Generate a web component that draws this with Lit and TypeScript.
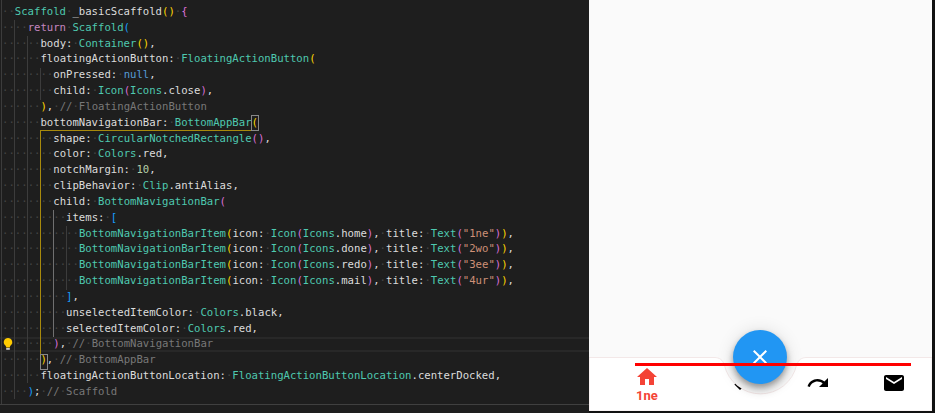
import { LitElement, html, css } from "lit";
import { customElement } from "lit/decorators.js";

type Seg = [string, string];
const t = "t", k = "k", f = "f", c = "c", n = "n", m = "m", y = "y", p = "p", b = "b", s = "s", v = "v";
const LINES: { i: number; segs: Seg[] }[] = [
  { i: 1, segs: [[t, "Scaffold"], [f, " _basicScaffold"], [y, "("], [y, ")"], [f, " "], [m, "{"]] },
  { i: 2, segs: [[k, "return"], [f, " "], [t, "Scaffold"], [b, "("]] },
  { i: 3, segs: [[f, "body: "], [t, "Container"], [y, "()"], [f, ","]] },
  { i: 3, segs: [[f, "floatingActionButton: "], [t, "FloatingActionButton"], [y, "("]] },
  { i: 4, segs: [[f, "onPressed: "], [n, "null"], [f, ","]] },
  { i: 4, segs: [[f, "child: "], [t, "Icon"], [p, "("], [t, "Icons"], [f, ".close"], [p, ")"], [f, ","]] },
  { i: 3, segs: [[y, ")"], [f, ", "], [c, "// FloatingActionButton"]] },
  { i: 3, segs: [[f, "bottomNavigationBar: "], [t, "BottomAppBar"], [y, "("]] },
  { i: 4, segs: [[f, "shape: "], [t, "CircularNotchedRectangle"], [p, "()"], [f, ","]] },
  { i: 4, segs: [[f, "color: "], [t, "Colors"], [f, ".red,"]] },
  { i: 4, segs: [[f, "notchMargin: "], [v, "10"], [f, ","]] },
  { i: 4, segs: [[f, "clipBehavior: "], [t, "Clip"], [f, ".antiAlias,"]] },
  { i: 4, segs: [[f, "child: "], [t, "BottomNavigationBar"], [p, "("]] },
  { i: 5, segs: [[f, "items: "], [b, "["]] },
  ...[["home", "1ne"], ["done", "2wo"], ["redo", "3ee"], ["mail", "4ur"]].map(([ic, ti]) => ({
    i: 6,
    segs: [[t, "BottomNavigationBarItem"], [y, "("], [f, "icon: "], [t, "Icon"], [p, "("], [t, "Icons"], [f, "." + ic], [p, ")"], [f, ", title: "], [t, "Text"], [p, "("], [s, `"${ti}"`], [p, ")"], [y, ")"], [f, ","]] as Seg[],
  })),
  { i: 5, segs: [[b, "]"], [f, ","]] },
  { i: 5, segs: [[f, "unselectedItemColor: "], [t, "Colors"], [f, ".black,"]] },
  { i: 5, segs: [[f, "selectedItemColor: "], [t, "Colors"], [f, ".red,"]] },
  { i: 4, segs: [[p, ")"], [f, ", "], [c, "// BottomNavigationBar"]] },
  { i: 3, segs: [[y, ")"], [f, ", "], [c, "// BottomAppBar"]] },
  { i: 3, segs: [[f, "floatingActionButtonLocation: "], [t, "FloatingActionButtonLocation"], [f, ".centerDocked,"]] },
  { i: 2, segs: [[b, ")"], [f, "; "], [c, "// Scaffold"]] },
];

const NOTCH = "M0 .5H125C131 .5 133.5 3 135.4 8A37 37 0 0 0 207.6 8C209.5 3 212 .5 218 .5H343V54H0z";

function token(cl: string, text: string) {
  const parts = text.split(/( )/).filter((x) => x.length);
  return parts.map((x) => (x === " " ? html`<span class="ws">·</span>` : html`<span class=${cl}>${x}</span>`));
}

@customElement("app-root")
export class AppRoot extends LitElement {
  static styles = css`
    :host { display: block; width: 935px; height: 413px; background: #111; overflow: hidden; }
    .root { display: flex; width: 935px; height: 413px; }
    .editor { position: relative; width: 589px; height: 413px; box-sizing: border-box; padding: 4px 0 0 2px; background: #1e1e1e;
      font-family: "DejaVu Sans Mono", monospace; font-size: 10.63px; color: #dcdcdc; }
    .line { position: relative; height: 15.83px; line-height: 15.83px; white-space: pre; }
    .t { color: #4ec9b0; } .k { color: #c586c0; } .f { color: #dcdcdc; } .c { color: #787878; }
    .n { color: #569cd6; } .m { color: #da70d6; } .y { color: #ffd700; } .p { color: #da70d6; }
    .b { color: #179fff; } .s { color: #ce9178; } .v { color: #b5cea8; }
    .ws { color: #444; }
    .hl { position: absolute; left: 0; right: 0; top: 337px; height: 11px; border-top: 2px solid #282828; border-bottom: 2px solid #282828; }
    .bottom { position: absolute; left: 0; right: 0; top: 404px; height: 1px; background: #404040; }
    .guide { position: absolute; width: 1px; background: #3c3c3c; }
    .g0 { left: 1px; top: 0; height: 404px; }
    .g1 { left: 14px; top: 20px; height: 379px; }
    .g2 { left: 27px; top: 36px; height: 347px; }
    .g3 { left: 40px; top: 68px; height: 32px; }
    .g4 { left: 53px; top: 210px; height: 127px; background: #707070; }
    .g5 { left: 66px; top: 226px; height: 64px; }
    .bracket { position: absolute; left: 40px; top: 130px; width: 1px; height: 225px; background: #a88a0c; }
    .bracket-top { position: absolute; left: 40px; top: 130px; width: 211px; height: 1px; background: #a88a0c; }
    .box { position: absolute; width: 6px; height: 14px; border: 1px solid #888; }
    .box-open { left: 251px; top: 115px; }
    .box-close { left: 40px; top: 354px; }
    .bulb { position: absolute; left: 0; top: 336px; }
    .phone { position: relative; width: 343px; height: 411px; background: #fafafa; overflow: hidden; }
    .bar { position: absolute; left: 0; top: 357px; width: 343px; height: 54px; }
    .red { position: absolute; left: 46px; top: 363px; width: 276px; height: 3px; background: #f00; }
    .fab { position: absolute; left: 144px; top: 330px; width: 54px; height: 54px; border-radius: 50%; background: #2196f3;
      box-shadow: 0 6px 10px rgba(0,0,0,.2), 0 1px 18px rgba(0,0,0,.12), 0 3px 5px rgba(0,0,0,.2); display: flex; align-items: center; justify-content: center; }
    .ic { position: absolute; width: 24px; height: 24px; }
    .home { left: 46px; top: 365px; }
    .redo { left: 217px; top: 371px; }
    .mail { left: 293px; top: 371px; }
    .label { position: absolute; left: 46px; width: 24px; top: 388px; text-align: center; font: 700 13px Roboto, sans-serif; color: #f44336; }
  `;
  render() {
    return html`<div class="root">
      <div class="editor">
        <div class="hl"></div>
        ${LINES.map((l) => html`<div class="line">${Array.from({ length: l.i * 2 }, () => html`<span class="ws">·</span>`)}${l.segs.map(([cl, tx]) => token(cl, tx))}</div>`)}
        <div class="guide g0"></div>
        <div class="guide g1"></div>
        <div class="guide g2"></div>
        <div class="guide g3"></div>
        <div class="guide g4"></div>
        <div class="guide g5"></div>
        <div class="bracket-top"></div><div class="bracket"></div>
        <div class="box box-open"></div><div class="box box-close"></div>
        <svg class="bulb" width="16" height="16" viewBox="0 0 16 16"><path fill="#ffcc00" d="M8 2a4.2 4.2 0 0 0-2.6 7.5c.6.5.8 1.2.8 2h3.6c0-.8.2-1.5.8-2A4.2 4.2 0 0 0 8 2z"/><rect x="6.2" y="12" width="3.6" height="1.8" fill="#ccc"/></svg>
        <div class="bottom"></div>
      </div>
      <div class="phone">
        <svg class="bar" viewBox="0 0 343 54">
          <defs><clipPath id="barclip"><path d=${NOTCH}/></clipPath></defs>
          <path fill="#fff" stroke="#f3e8e8" stroke-width="1" d=${NOTCH}/>
          <g clip-path="url(#barclip)"><path transform="translate(142 14)" fill="#000" d="M9 16.2L4.8 12l-1.4 1.4L9 19 21 7l-1.4-1.4z"/></g>
        </svg>
        <svg class="ic home" viewBox="0 0 24 24"><path fill="#f44336" d="M10 20v-6h4v6h5v-8h3L12 3 2 12h3v8z"/></svg>
        <div class="label">1ne</div>
        <svg class="ic redo" viewBox="0 0 24 24"><path fill="#000" d="M18.4 10.6C16.55 8.99 14.15 8 11.5 8c-4.65 0-8.58 3.03-9.96 7.22L3.9 16c1.05-3.19 4.05-5.5 7.6-5.5 1.95 0 3.73.72 5.12 1.88L13 16h9V7l-3.6 3.6z"/></svg>
        <svg class="ic mail" viewBox="0 0 24 24"><path fill="#000" d="M20 4H4c-1.1 0-1.99.9-1.99 2L2 18c0 1.1.9 2 2 2h16c1.1 0 2-.9 2-2V6c0-1.1-.9-2-2-2zm0 4l-8 5-8-5V6l8 5 8-5v2z"/></svg>
        <div class="fab"><svg width="24" height="24" viewBox="0 0 24 24"><path fill="#fff" d="M19 6.41L17.59 5 12 10.59 6.41 5 5 6.41 10.59 12 5 17.59 6.41 19 12 13.41 17.59 19 19 17.59 13.41 12z"/></svg></div>
        <div class="red"></div>
      </div>
    </div>`;
  }
}
